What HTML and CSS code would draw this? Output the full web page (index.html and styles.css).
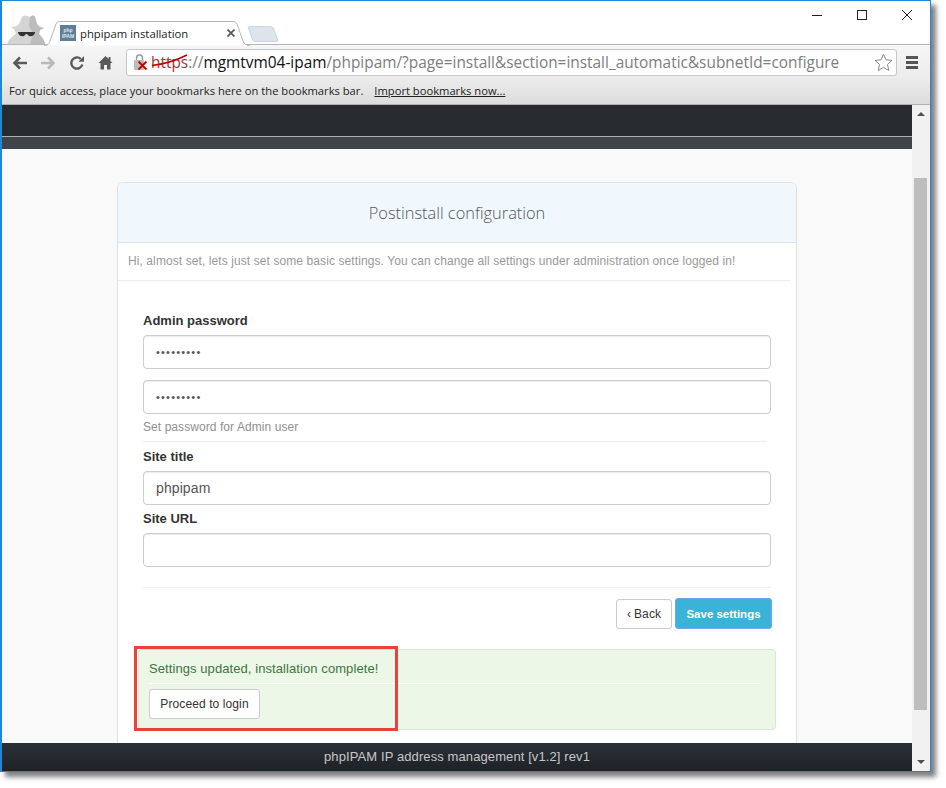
FILE: index.html
```html
<!DOCTYPE html>
<html lang="en">
<head>
<meta charset="utf-8">
<title>phpipam installation</title>
<link rel="stylesheet" href="styles.css">
</head>
<body>
<div class="window">
  <div class="titlebar">
    <div class="tab">
      <svg class="tab-shape" width="206" height="25" viewBox="0 0 206 25"><path d="M0 24.500C4 24.500 5 23 6 20L12 3C13 1 14 .5 16 .5H188C191 .5 192 1 193 3L199 20C200 23 202 24.500 206 24.500" fill="#fff" stroke="#b5b5b5"/></svg>
      <span class="favicon"><span>php</span><span>IPAM</span></span>
      <span class="tab-title">phpipam installation</span>
      <svg class="tab-close" width="8" height="8" viewBox="0 0 8 8"><path d="M0.500 0.500l7 7M7.500 0.500l-7 7" stroke="#5a5a5a" stroke-width="1.800"/></svg>
    </div>
    <svg class="spy" width="40" height="30" viewBox="0 0 40 30">
      <path d="M1 30C3 25 6 22 10 20L8 15 5 13C9 13 12 12 13 10L16 3C18 1 21 2 24 3 26 1 28 1 29 3L31 10C32 12 34 13 38 14L34 16 33 20C35 22 38 25 39 30Z" fill="#d4d4d4"/>
      <path d="M24 3C26 1 28 1 29 3L31 10C32 12 34 13 38 14L34 16 33 20C35 22 38 25 39 30H24L27 20 23 12Z" fill="#bcbcbc"/>
      <path d="M12 18h17c0 3-3 5-6 4l-2-2h-1l-2 2c-3 1-6-1-6-4z" fill="#333"/>
    </svg>
    <div class="newtab"></div>
    <div class="winctl">
      <svg width="10" height="10" viewBox="0 0 10 10"><path d="M0 5.500h10" stroke="#222" stroke-width="1"/></svg>
      <svg width="10" height="10" viewBox="0 0 10 10"><rect x="0.500" y="0.500" width="9" height="9" fill="none" stroke="#222"/></svg>
      <svg width="10" height="10" viewBox="0 0 10 10"><path d="M0 0l10 10M10 0L0 10" stroke="#222"/></svg>
    </div>
  </div>
  <div class="toolbar">
    <svg class="nav" width="18" height="16" viewBox="0 0 18 16"><path d="M16 8H4M9 2.500L3.500 8 9 13.500" fill="none" stroke="#5a5a5a" stroke-width="2.600"/></svg>
    <svg class="nav" width="18" height="16" viewBox="0 0 18 16"><path d="M2 8h12M9 2.500L14.500 8 9 13.500" fill="none" stroke="#b9b9b9" stroke-width="2.600"/></svg>
    <svg class="nav" width="16" height="16" viewBox="0 0 16 16"><path d="M13.300 9.500A5.600 5.600 0 1 1 11.800 4" fill="none" stroke="#5a5a5a" stroke-width="2.400"/><path d="M9.500 6.800h5.500V1z" fill="#5a5a5a"/></svg>
    <svg class="nav" width="15" height="15" viewBox="0 0 15 15"><path d="M7.500 1L0.500 8h2v6.500h3.500V10h3v4.500h3.500V8h2l-2-2V2h-2v2z" fill="#5a5a5a"/></svg>
    <div class="omnibox">
      <svg class="lock" width="15" height="17" viewBox="0 0 15 17"><path d="M3.500 6V4a3 3 0 0 1 6 0v2" fill="none" stroke="#9a9a9a" stroke-width="1.500"/><rect x="1" y="6" width="10" height="10" rx="1" fill="#bbb"/><path d="M5.500 7.500l8 8M13.500 7.500l-8 8" stroke="#c00" stroke-width="1.800"/></svg>
      <span class="url"><span class="scheme">https<svg class="strike" width="38" height="14" viewBox="0 0 38 14"><path d="M1 11.500C14 10 26 6 36 1" fill="none" stroke="#b00" stroke-width="1.500"/></svg></span><span class="dim">://</span>mgmtvm04-ipam<span class="dim">/phpipam/?page=install&amp;section=install_automatic&amp;subnetId=configure</span></span>
      <svg class="star" width="19" height="19" viewBox="0 0 19 19"><path d="M9.500 1.200l2.500 5.600 6 .6-4.500 4.100 1.300 6L9.500 14.400l-5.300 3.100 1.300-6L1 7.400l6-.6z" fill="#fff" stroke="#8a8a8a"/></svg>
    </div>
    <div class="menu"><span></span><span></span><span></span></div>
  </div>
  <div class="bookmarks">For quick access, place your bookmarks here on the bookmarks bar.<a class="import">Import bookmarks now...</a></div>
  <div class="viewport">
    <div class="page">
      <div class="topnav"></div>
      <div class="subnav"></div>
      <div class="content">
        <div class="card">
          <div class="card-head">Postinstall configuration</div>
          <div class="card-intro">Hi, almost set, lets just set some basic settings. You can change all settings under administration once logged in!</div>
          <form class="form">
            <div class="label first">Admin password</div>
            <div class="input dots">•••••••••</div>
            <div class="input dots second">•••••••••</div>
            <div class="help">Set password for Admin user</div>
            <div class="rule"></div>
            <div class="label title">Site title</div>
            <div class="input">phpipam</div>
            <div class="label url-label">Site URL</div>
            <div class="input"></div>
            <div class="rule wide"></div>
            <div class="actions">
              <span class="btn"><span class="chev">‹</span> Back</span>
              <span class="btn primary">Save settings</span>
            </div>
          </form>
          <div class="alert">
            <div class="alert-text">Settings updated, installation complete!</div>
            <div class="alert-rule"></div>
            <span class="btn login">Proceed to login</span>
          </div>
        </div>
      </div>
      <div class="footer">phpIPAM IP address management [v1.2] rev1</div>
    </div>
    <div class="scrollbar">
      <span class="arrow up"></span>
      <div class="track"><div class="thumb"></div></div>
      <span class="arrow down"></span>
    </div>
  </div>
</div>
<div class="callout"></div>
</body>
</html>
```
FILE: styles.css
```css
* { box-sizing: border-box; }
html, body { margin: 0; padding: 0; background: #fff; }
body { width: 946px; height: 788px; overflow: hidden; position: relative; font-family: "Liberation Sans", Arial, sans-serif; }

.window {
  width: 931px; height: 772px;
  border: 1px solid #1e88d8;
  border-left-width: 2px;
  box-shadow: 5px 5px 5px rgba(0,0,0,.5);
  display: flex; flex-direction: column;
  background: #fff;
}

.titlebar { height: 44px; flex: none; display: flex; align-items: flex-end; position: relative; border-bottom: 1px solid #b5b5b5; background: #fff; }
.spy { position: absolute; left: 4px; top: 13px; z-index: 2; }
.tab {
  margin-left: 42px; width: 206px; height: 24px; margin-bottom: -1px;
  display: flex; align-items: center;
  padding-left: 16px;
  position: relative; z-index: 1;
}
.tab-shape { position: absolute; left: 0; top: 0; }
.favicon { width: 16px; height: 16px; background: #5f7f99; display: flex; flex-direction: column; align-items: center; justify-content: center; font: bold 5px/6px "Liberation Sans", sans-serif; color: #dfe6ec; flex: none; position: relative; }
.tab-title { font: 11.300px "Open Sans", sans-serif; color: #222; margin-left: 4px; flex: 1; white-space: nowrap; position: relative; }
.tab-close { margin-right: 15px; flex: none; position: relative; }
.newtab { width: 26px; height: 16px; margin-left: 0; margin-bottom: 2px; background: #dde4ec; border: 1px solid #ccd3da; border-radius: 3px; transform: skewX(20deg); }
.winctl { position: absolute; right: 0; top: 9px; display: flex; gap: 35px; padding-right: 18px; }
.winctl svg { display: block; }

.toolbar { height: 33px; flex: none; display: flex; align-items: center; padding: 2px 0 0 9px; background: linear-gradient(#f6f6f6, #ececec); }
.nav { flex: none; margin-right: 10px; }
.nav:nth-child(2) { margin-right: 12px; }
.nav:nth-child(3) { margin-right: 13px; }
.nav:nth-child(4) { margin-right: 13px; }
.omnibox { width: 771px; height: 27px; flex: none; display: flex; align-items: center; background: #fff; border: 1px solid #c6c6c6; border-radius: 3px; padding-left: 6px; position: relative; }
.lock { flex: none; }
.url { font: 15.400px "Open Sans", sans-serif; color: #111; white-space: nowrap; margin-left: 3px; }
.scheme { color: #a83232; position: relative; }
.strike { position: absolute; left: 0; top: 2px; }
.dim { color: #7d7d7d; }
.star { position: absolute; right: 3px; top: 3px; }
.menu { width: 12px; margin-left: 9px; display: flex; flex-direction: column; gap: 2px; flex: none; }
.menu span { height: 3px; background: #555; display: block; }

.bookmarks { height: 27px; flex: none; padding: 0 0 2px 7px; display: flex; align-items: center; font: 11.200px "Open Sans", sans-serif; color: #222; background: linear-gradient(#ececec, #dcdcdc); border-bottom: 1px solid #b0b0b0; white-space: nowrap; }
.import { margin-left: 11px; text-decoration: underline; }

.viewport { flex: 1; min-height: 0; display: flex; }
.page { flex: 1; min-width: 0; display: flex; flex-direction: column; }
.topnav { height: 31px; flex: none; background: #272b2e; border-bottom: 0; }
.subnav { height: 13px; flex: none; background: #3f4448; border-top: 1px solid #aeb0b1; }
.content { flex: 1; min-height: 0; overflow: hidden; background: #f9f9f9; padding: 33px 0 0 115px; }

.card { width: 680px; height: 640px; background: #fff; border: 1px solid #dde2e6; border-radius: 6px; }
.card-head { height: 60px; background: #f0f8fe; border-bottom: 1px solid #dbe5ee; border-radius: 6px 6px 0 0; font: 300 16.400px/60px "Open Sans", sans-serif; color: #555; text-align: center; }
.card-intro { width: 673px; height: 38px; border-bottom: 1px solid #eee; padding-left: 10px; font: 12px/36px "Liberation Sans", sans-serif; letter-spacing: .09px; color: #999; white-space: nowrap; }
.form { padding: 0 25px; width: 654px; }
.label { font: bold 13px/18px "Liberation Sans", sans-serif; color: #333; }
.label.first { margin-top: 31px; margin-bottom: 5px; }
.label.title { margin-top: 6px; margin-bottom: 5px; }
.label.url-label { margin-top: 5px; margin-bottom: 5px; }
.input { width: 628px; height: 34px; background: #fff; border: 1px solid #ccc; border-radius: 4px; box-shadow: inset 0 1px 1px rgba(0,0,0,.075); padding-left: 12px; font: 14px/32px "Liberation Sans", sans-serif; letter-spacing: .1px; color: #555; }
.dots { font-size: 11px; letter-spacing: 1.200px; }
.second { margin-top: 11px; }
.help { font: 12px/14px "Liberation Sans", sans-serif; letter-spacing: .07px; color: #8f8f8f; margin-top: 6px; }
.rule { width: 624px; height: 1px; background: #eee; margin-top: 7px; }
.rule.wide { width: 628px; margin-top: 20px; }
.actions { display: flex; justify-content: flex-end; gap: 3px; margin-top: 11px; width: 629px; }
.btn { display: inline-flex; align-items: center; justify-content: center; height: 30px; background: #fff; border: 1px solid #ccc; border-radius: 3px; font: 12px "Liberation Sans", sans-serif; letter-spacing: .1px; color: #333; white-space: nowrap; }
.actions .btn { width: 56px; gap: 3px; }
.actions .btn.primary { width: 97px; height: 31px; margin-top: -1px; background: #39b3d7; border-color: #6fa8e8; color: #fff; font-size: 11.500px; font-weight: bold; letter-spacing: 0; }
.alert { width: 638px; height: 81px; margin: 20px 0 0 20px; background: #edf7e8; border: 1px solid #d9e8cf; border-radius: 4px; padding: 10px 10px 0 10px; }
.alert-text { font: 13px/17px "Liberation Sans", sans-serif; letter-spacing: .08px; color: #3c763d; }
.alert-rule { width: 611px; height: 1px; background: #fff; margin-top: 6px; }
.btn.login { width: 111px; margin-top: 5px; }

.footer { height: 28px; flex: none; background: linear-gradient(#2a3038, #1e2226); color: #c7c7c7; font: 13px/28px "Liberation Sans", sans-serif; letter-spacing: .1px; text-align: center; }

.scrollbar { width: 18px; flex: none; background: #f1f1f1; display: flex; flex-direction: column; align-items: center; }
.arrow { width: 0; height: 0; border-left: 4px solid transparent; border-right: 4px solid transparent; flex: none; }
.arrow.up { border-bottom: 4px solid #505050; margin: 7px 0; }
.arrow.down { border-top: 4px solid #505050; margin: 7px 0; }
.track { flex: 1; width: 100%; padding: 55px 3px 0 2px; }
.thumb { height: 532px; background: #bdbdbd; }

.callout { position: absolute; left: 134px; top: 646px; width: 264px; height: 85px; border: 3px solid #ea4238; }
```
